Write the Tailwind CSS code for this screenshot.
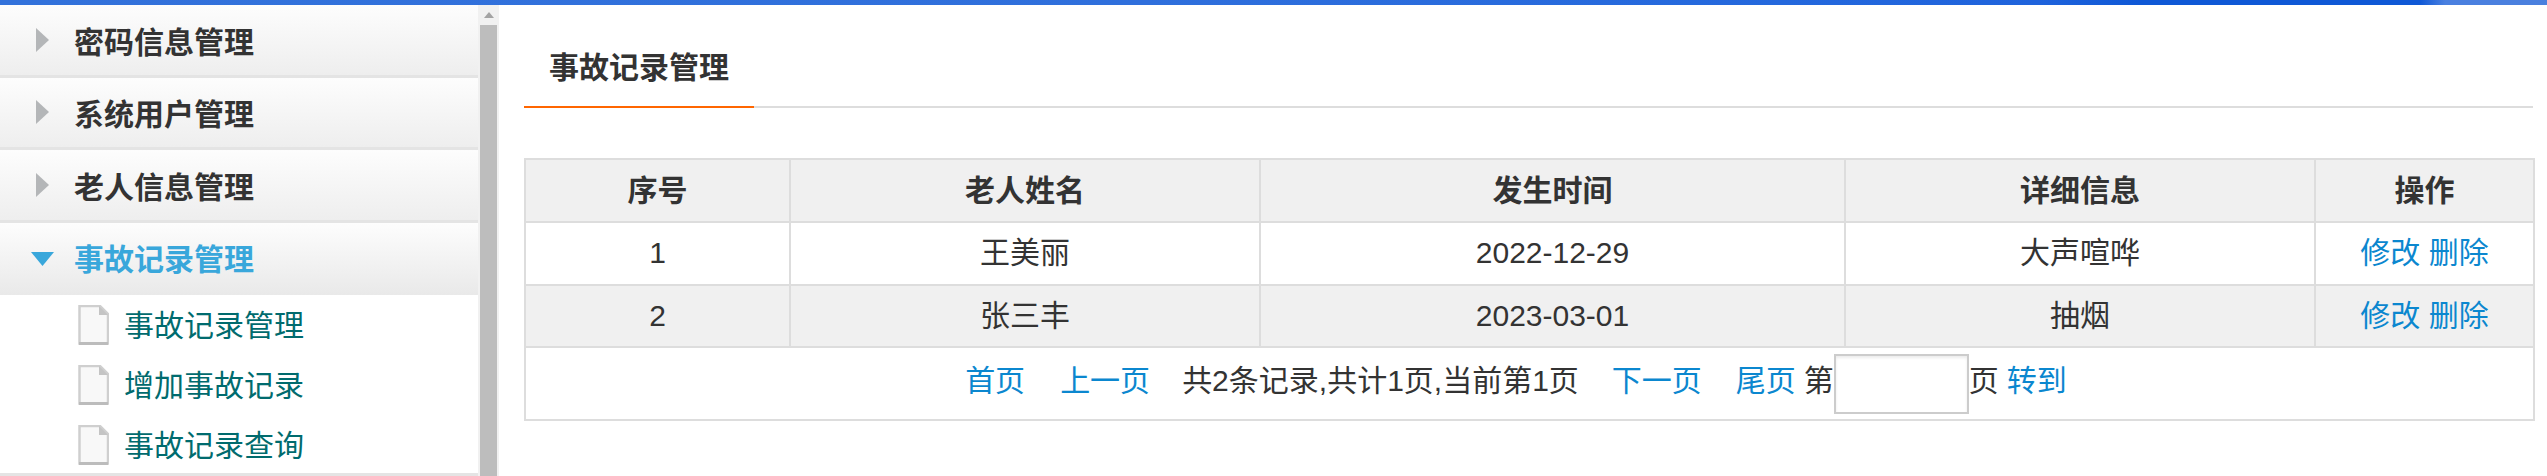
<!DOCTYPE html>
<html lang="zh-CN">
<head>
<meta charset="utf-8">
<script src="https://cdn.jsdelivr.net/npm/@tailwindcss/browser@4"></script>
<title>事故记录管理</title>
</head>
<body class="h-[476px] overflow-hidden bg-white font-['Liberation_Sans','Noto_Sans_CJK_SC',sans-serif] text-[30px] text-[#333]">
<div class="h-[5px] bg-[linear-gradient(90deg,#3372db_0%,#2f6fdc_45%,#2468dd_70%,#1f63dc_80%,#0f58d6_84%,#0f58d6_95%,#4a80e0_96%,#4a80de_100%)]"></div>
<div class="flex h-[471px]">
  <aside class="flex w-[499px] shrink-0">
    <nav class="w-[478px] overflow-hidden">
      <div class="flex h-[72.5px] items-center border-b-[3px] border-[#e4e4e4] bg-linear-to-b from-[#fdfdfd] to-[#eeeeee] font-bold">
        <svg class="ml-[36px] mr-[26px] h-[24px] w-[13px] text-[#b4b6b8]" viewBox="0 0 13 24"><path d="M0 0L13 12L0 24Z" fill="currentColor"/></svg>
        <span class="-ml-[1px] mt-[5px]">密码信息管理</span>
      </div>
      <div class="flex h-[72.5px] items-center border-b-[3px] border-[#e4e4e4] bg-linear-to-b from-[#fdfdfd] to-[#eeeeee] font-bold">
        <svg class="ml-[36px] mr-[26px] h-[24px] w-[13px] text-[#b4b6b8]" viewBox="0 0 13 24"><path d="M0 0L13 12L0 24Z" fill="currentColor"/></svg>
        <span class="-ml-[1px] mt-[5px]">系统用户管理</span>
      </div>
      <div class="flex h-[72.5px] items-center border-b-[3px] border-[#e4e4e4] bg-linear-to-b from-[#fdfdfd] to-[#eeeeee] font-bold">
        <svg class="ml-[36px] mr-[26px] h-[24px] w-[13px] text-[#b4b6b8]" viewBox="0 0 13 24"><path d="M0 0L13 12L0 24Z" fill="currentColor"/></svg>
        <span class="-ml-[1px] mt-[5px]">老人信息管理</span>
      </div>
      <div class="flex h-[72.5px] items-center bg-linear-to-b from-[#fdfdfd] to-[#e9e9e9] font-bold text-[#39a7db]">
        <svg class="ml-[31px] mr-[21px] h-[14px] w-[23px]" viewBox="0 0 23 14"><path d="M0 0H23L11.5 14Z" fill="currentColor"/></svg>
        <span class="-ml-[1px] mt-[2px]">事故记录管理</span>
      </div>
      <ul class="text-[#006b6e]">
        <li class="flex h-[60px] items-center pl-[78px]">
          <svg class="mr-[15px] h-[40px] w-[31px]" viewBox="0 0 31 40"><path d="M1.5 1H22L30 9V38.5H1.5Z" fill="#f8f8f8" stroke="#cfcfcf" stroke-width="2.5"/><path d="M1 38.5H30" stroke="#bcbcbc" stroke-width="3"/><path d="M21 1V10H30Z" fill="#c4c4c4"/></svg>
          <span>事故记录管理</span>
        </li>
        <li class="flex h-[60px] items-center pl-[78px]">
          <svg class="mr-[15px] h-[40px] w-[31px]" viewBox="0 0 31 40"><path d="M1.5 1H22L30 9V38.5H1.5Z" fill="#f8f8f8" stroke="#cfcfcf" stroke-width="2.5"/><path d="M1 38.5H30" stroke="#bcbcbc" stroke-width="3"/><path d="M21 1V10H30Z" fill="#c4c4c4"/></svg>
          <span>增加事故记录</span>
        </li>
        <li class="flex h-[60px] items-center pl-[78px]">
          <svg class="mr-[15px] h-[40px] w-[31px]" viewBox="0 0 31 40"><path d="M1.5 1H22L30 9V38.5H1.5Z" fill="#f8f8f8" stroke="#cfcfcf" stroke-width="2.5"/><path d="M1 38.5H30" stroke="#bcbcbc" stroke-width="3"/><path d="M21 1V10H30Z" fill="#c4c4c4"/></svg>
          <span>事故记录查询</span>
        </li>
      </ul>
      <div class="mt-[-2px] h-[3px] bg-[#e4e4e4]"></div>
    </nav>
    <div class="flex w-[21px] flex-col items-center bg-[#f1f1f1]">
      <div class="flex h-[21px] w-full items-center justify-center">
        <svg class="h-[6px] w-[10px]" viewBox="0 0 10 6"><path d="M5 0L10 6H0Z" fill="#a3a3a3"/></svg>
      </div>
      <div class="h-full w-[17px] bg-[#bdbdbd]"></div>
    </div>
  </aside>
  <main class="min-w-0 flex-1 pl-[25px] pr-[14px]">
    <div class="flex h-[103px] border-b-2 border-[#ddd]">
      <div class="-mb-[2px] flex h-[103px] w-[230px] items-center border-b-2 border-[#f60] pl-[25px] pt-[23px] font-bold">事故记录管理</div>
    </div>
    <table class="mt-[50px] w-[2009px] table-fixed border-collapse border-2 border-[#ddd] text-center">
      <colgroup>
        <col class="w-[265px]"><col class="w-[470px]"><col class="w-[585px]"><col class="w-[470px]"><col class="w-[219px]">
      </colgroup>
      <thead>
        <tr class="h-[63px] bg-[#f0f0f0] font-bold">
          <th class="border-2 border-[#ddd]">序号</th>
          <th class="border-2 border-[#ddd]">老人姓名</th>
          <th class="border-2 border-[#ddd]">发生时间</th>
          <th class="border-2 border-[#ddd]">详细信息</th>
          <th class="border-2 border-[#ddd]">操作</th>
        </tr>
      </thead>
      <tbody>
        <tr class="h-[63px]">
          <td class="border-2 border-[#ddd] pb-[2px]">1</td>
          <td class="border-2 border-[#ddd] pb-[2px]">王美丽</td>
          <td class="border-2 border-[#ddd] pb-[2px]">2022-12-29</td>
          <td class="border-2 border-[#ddd] pb-[2px]">大声喧哗</td>
          <td class="border-2 border-[#ddd] pb-[2px] text-[#0b87cf]"><a href="#">修改</a> <a href="#">删除</a></td>
        </tr>
        <tr class="h-[62px] bg-[#f0f0f0]">
          <td class="border-2 border-[#ddd] pb-[2px]">2</td>
          <td class="border-2 border-[#ddd] pb-[2px]">张三丰</td>
          <td class="border-2 border-[#ddd] pb-[2px]">2023-03-01</td>
          <td class="border-2 border-[#ddd] pb-[2px]">抽烟</td>
          <td class="border-2 border-[#ddd] pb-[2px] text-[#0b87cf]"><a href="#">修改</a> <a href="#">删除</a></td>
        </tr>
        <tr class="h-[73px]">
          <td colspan="5" class="border-2 border-[#ddd]">
            <div class="flex items-center justify-center pr-[27px]">
              <a href="#" class="mb-[6px] text-[#0b87cf]">首页</a>
              <a href="#" class="mb-[6px] ml-[35px] text-[#0b87cf]">上一页</a>
              <span class="mb-[6px] ml-[32px]">共2条记录,共计1页,当前第1页</span>
              <a href="#" class="mb-[6px] ml-[33px] text-[#0b87cf]">下一页</a>
              <a href="#" class="mb-[6px] ml-[34px] text-[#0b87cf]">尾页</a>
              <span class="mb-[6px] ml-[8px]">第</span>
              <input class="h-[60px] w-[135px] border-2 border-[#ccc] bg-white shadow-[inset_0_2px_3px_rgba(0,0,0,0.08)]" type="text" aria-label="页码">
              <span class="mb-[6px]">页</span>
              <a href="#" class="mb-[6px] ml-[8px] text-[#0b87cf]">转到</a>
            </div>
          </td>
        </tr>
      </tbody>
    </table>
  </main>
</div>
</body>
</html>
